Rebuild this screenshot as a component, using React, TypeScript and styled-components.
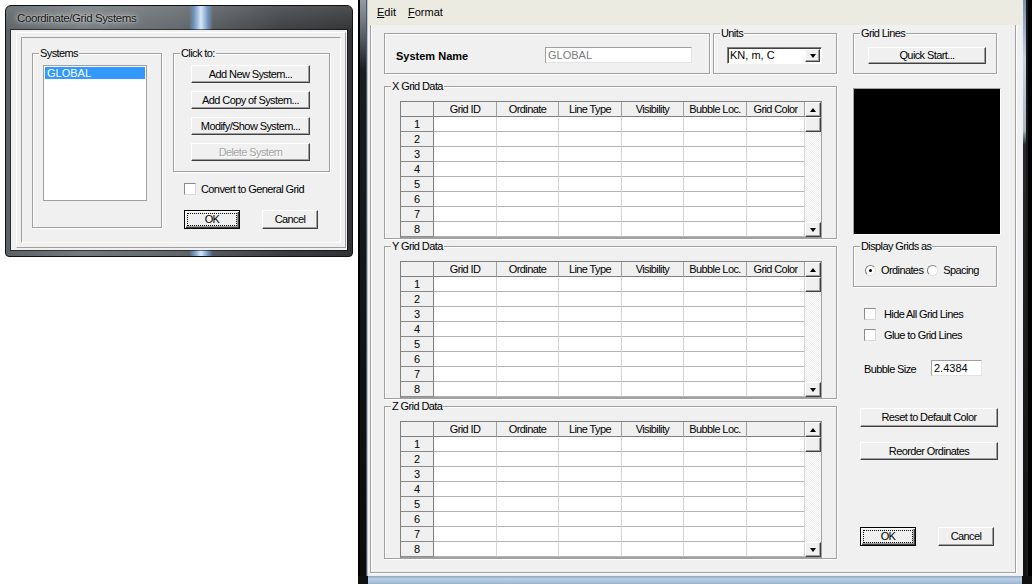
import React from 'react';
import styled, { createGlobalStyle, css } from 'styled-components';

const GlobalStyle = createGlobalStyle`
  html, body { margin: 0; padding: 0; background: #fff; }
  body {
    font-family: "Liberation Sans", Arial, sans-serif;
    font-size: 11px;
    line-height: 13px;
    color: #000;
  }
  * { box-sizing: border-box; }
`;

const raised = css`
  background: #f0f0f0;
  border: 1px solid;
  border-color: #fff #404040 #404040 #fff;
  box-shadow: inset -1px -1px 0 #a0a0a0;
`;

const sunken = css`
  border: 1px solid;
  border-color: #808080 #fff #fff #808080;
  box-shadow: inset 1px 1px 0 #404040;
`;

const Page = styled.div`
  width: 1032px;
  height: 584px;
  display: flex;
  background: #fff;
  overflow: hidden;
`;

/* ---------- left dialog ---------- */

const LeftCol = styled.div`
  width: 358px;
  flex-shrink: 0;
  padding: 5px 0 0 5px;
`;

const AeroDialog = styled.div`
  width: 348px;
  height: 252px;
  display: flex;
  flex-direction: column;
  padding: 0 5px 6px 5px;
  border: 1px solid #101010;
  border-radius: 6px 6px 4px 4px;
  background:
    linear-gradient(90deg, transparent 183px, #6f93bf 188px, #d6e6f6 195px, #6f93bf 202px, transparent 207px),
    linear-gradient(180deg, rgba(255, 255, 255, 0.14), rgba(255, 255, 255, 0) 28px),
    linear-gradient(90deg, #5b6165 0%, #747a7e 22%, #60666a 50%, #3b3e41 80%, #2f3133 100%);
`;

const TitleBar = styled.div`
  height: 24px;
  display: flex;
  align-items: center;
  padding-left: 6px;
  font-size: 11.5px;
  letter-spacing: -0.4px;
  color: #111;
  text-shadow: 0 0 6px rgba(255, 255, 255, 0.9), 0 0 2px rgba(255, 255, 255, 0.7);
`;

const DialogClient = styled.div`
  flex: 1;
  background: #f0f0f0;
  padding: 2px 1px 2px 5px;
  box-shadow: 0 0 0 1px rgba(0, 0, 0, 0.55);
`;

const EtchOuter = styled.div`
  height: 100%;
  padding: 4px;
  border: 1px solid;
  border-color: #fff #a0a0a0 #a0a0a0 #fff;
`;

const EtchInner = styled.div`
  height: 100%;
  display: flex;
  align-items: flex-start;
  gap: 11px;
  padding: 15px 0 0 10px;
  border: 1px solid;
  border-color: #a0a0a0 #fff #fff #a0a0a0;
`;

const GroupBox = styled.div<{ $w: number; $h: number; $pad?: string; $mt?: number }>`
  position: relative;
  flex-shrink: 0;
  width: ${p => p.$w}px;
  height: ${p => p.$h}px;
  margin-top: ${p => p.$mt ?? 0}px;
  padding: ${p => p.$pad ?? '0'};
  border: 1px solid #a0a0a0;
  box-shadow: inset 1px 1px 0 #fff, 1px 1px 0 #fff;
`;

const SystemNameBox = styled(GroupBox)`
  display: flex;
  align-items: center;
`;

const Legend = styled.span`
  position: absolute;
  top: -7px;
  left: 6px;
  padding: 0 1px;
  background: #f0f0f0;
  letter-spacing: -0.6px;
  white-space: nowrap;
`;

const ListBox = styled.div`
  width: 104px;
  height: 136px;
  padding: 1px;
  background: #fff;
  border: 1px solid #a0a0a0;
`;

const ListItem = styled.div`
  height: 12px;
  line-height: 12px;
  padding-left: 2px;
  background: #3399ff;
  color: #fff;
`;

const SideColumn = styled.div`
  display: flex;
  flex-direction: column;
  align-items: flex-start;
`;

const ButtonStack = styled.div`
  display: flex;
  flex-direction: column;
  gap: 8px;
`;

const Btn = styled.div<{ $w: number; $h: number; $disabled?: boolean; $def?: boolean; $mt?: number; $ml?: number }>`
  ${raised};
  flex-shrink: 0;
  width: ${p => p.$w}px;
  height: ${p => p.$h}px;
  margin-top: ${p => p.$mt ?? 0}px;
  margin-left: ${p => p.$ml ?? 0}px;
  display: flex;
  align-items: center;
  justify-content: center;
  letter-spacing: -0.6px;
  white-space: nowrap;
  ${p => p.$disabled && css`
    color: #a3a3a3;
    text-shadow: 1px 1px 0 #fff;
  `}
  ${p => p.$def && css`
    border-color: #000;
    box-shadow: inset 1px 1px 0 #fff, inset -1px -1px 0 #404040, inset -2px -2px 0 #a0a0a0;
    padding: 2px;
  `}
`;

const Focus = styled.span`
  flex: 1;
  align-self: stretch;
  display: flex;
  align-items: center;
  justify-content: center;
  border: 1px dotted #000;
`;

const CheckRow = styled.div<{ $mt: number; $ml: number; $gap: number }>`
  height: 12px;
  display: flex;
  align-items: center;
  gap: ${p => p.$gap}px;
  margin-top: ${p => p.$mt}px;
  margin-left: ${p => p.$ml}px;
  letter-spacing: -0.6px;
  white-space: nowrap;
`;

const CheckBox = styled.span`
  width: 12px;
  height: 12px;
  flex-shrink: 0;
  background: #fff;
  border: 1px solid;
  border-color: #8a8a8a #d8d8d8 #d8d8d8 #8a8a8a;
`;

const ButtonRow = styled.div<{ $mt: number; $ml: number; $gap: number }>`
  display: flex;
  align-items: flex-start;
  gap: ${p => p.$gap}px;
  margin-top: ${p => p.$mt}px;
  margin-left: ${p => p.$ml}px;
`;

/* ---------- right window ---------- */

const RightWin = styled.div`
  width: 674px;
  height: 584px;
  flex-shrink: 0;
  display: grid;
  grid-template-columns: 10px 1fr 10px;
  grid-template-rows: 1fr 8px;
`;

const SideFrame = styled.div<{ $side: 'l' | 'r' }>`
  ${p => p.$side === 'l'
    ? css`
      background:
        linear-gradient(90deg, #000 0 2px, transparent 2px 8px, #4e5864 8px 9px, #b8c2cc 9px 10px),
        linear-gradient(180deg, #939ca6 0, #5a6168 35px, #1b1d1f 70px, #0c0c0c 100%);
    `
    : css`
      background:
        linear-gradient(90deg, #e8eef4 0 1px, transparent 1px 4px, #1a1a1a 4px 6px, #000 6px 10px),
        linear-gradient(180deg, #7d8fa6 0, #c6d4e2 60px, #aab6c2 130px, #25292d 145px, #111 100%);
    `}
`;

const BottomFrame = styled.div`
  grid-column: 1 / -1;
  background:
    linear-gradient(90deg, #101010 0 10px, transparent 10px calc(100% - 10px), #101010 calc(100% - 10px)),
    linear-gradient(180deg, #8fa7c2 0, #bcd0e5 3px, #9bb4cf 8px);
`;

const WinContent = styled.div`
  display: flex;
  flex-direction: column;
  min-height: 0;
`;

const MenuBar = styled.div`
  height: 25px;
  flex-shrink: 0;
  display: flex;
  align-items: center;
  padding-left: 3px;
  background: #ecebe1;
`;

const MenuItem = styled.span`
  padding: 0 6px;
  font-size: 11px;
  u { text-decoration: underline; text-underline-offset: 1px; }
`;

const WinBody = styled.div`
  flex: 1;
  display: flex;
  background: #f0f0f0;
  padding: 0 6px 3px 2px;
`;

const EtchedFrame = styled.div`
  flex: 1;
  display: flex;
  gap: 16px;
  padding: 8px 0 0 13px;
  border: 1px solid #a0a0a0;
  border-top: none;
  box-shadow: inset 1px 0 0 #fff, 1px 1px 0 #fff;
`;

const LeftArea = styled.div`
  width: 453px;
  display: flex;
  flex-direction: column;
`;

const TopRow = styled.div`
  display: flex;
  gap: 3px;
`;

const BoldLabel = styled.span`
  width: 149px;
  flex-shrink: 0;
  font-weight: bold;
  padding-top: 5px;
`;

const EditBox = styled.div<{ $w: number; $muted?: boolean; $mt?: number }>`
  width: ${p => p.$w}px;
  height: 16px;
  flex-shrink: 0;
  display: flex;
  align-items: center;
  padding-left: 2px;
  background: #fff;
  border: 1px solid;
  border-color: #a0a0a0 #e3e3e3 #e3e3e3 #a0a0a0;
  color: ${p => (p.$muted ? '#7a7a7a' : '#000')};
  margin-top: ${p => p.$mt ?? 0}px;
  letter-spacing: 0;
`;

const Combo = styled.div`
  width: 95px;
  height: 17px;
  display: flex;
  align-items: center;
  background: #fff;
  padding: 0 1px 0 2px;
  ${sunken};
`;

const ComboText = styled.span`
  flex: 1;
`;

const ComboBtn = styled.span`
  ${raised};
  width: 15px;
  height: 13px;
  display: flex;
  align-items: center;
  justify-content: center;
`;

const Arrow = styled.span<{ $dir: 'up' | 'down' }>`
  width: 0;
  height: 0;
  border-left: 3.5px solid transparent;
  border-right: 3.5px solid transparent;
  ${p => (p.$dir === 'up' ? css`border-bottom: 4px solid #000;` : css`border-top: 4px solid #000;`)}
`;

/* table */

const TableFrame = styled.div`
  width: 422px;
  height: 137px;
  display: flex;
  background: #fff;
  border: 1px solid;
  border-color: #808080 #a0a0a0 #a0a0a0 #808080;
  overflow: hidden;
`;

const Cells = styled.div`
  display: grid;
  grid-template-columns: 33px 63px 62px 63px 62px 63px 58px;
  grid-auto-rows: 15px;
  align-content: start;
`;

const HeadCell = styled.div<{ $corner?: boolean }>`
  background: #f0f0f0;
  border-right: 1px solid ${p => (p.$corner ? '#808080' : '#a0a0a0')};
  border-bottom: 1px solid #808080;
  display: flex;
  align-items: center;
  justify-content: center;
  letter-spacing: -0.6px;
  white-space: nowrap;
  overflow: hidden;
`;

const RowHead = styled.div`
  background: #f0f0f0;
  border-right: 1px solid #808080;
  border-bottom: 1px solid #8a8a8a;
  display: flex;
  align-items: center;
  justify-content: center;
`;

const DataCell = styled.div`
  background: #fff;
  border-right: 1px solid #d4d4d4;
  border-bottom: 1px solid #b4b4b4;
`;

const ScrollBar = styled.div`
  width: 16px;
  display: flex;
  flex-direction: column;
`;

const ScrollBtn = styled.div`
  ${raised};
  height: 15px;
  flex-shrink: 0;
  display: flex;
  align-items: center;
  justify-content: center;
`;

const ScrollTrack = styled.div`
  flex: 1;
  background: repeating-conic-gradient(#fdfdfd 0 25%, #ededed 0 50%) 0 0 / 2px 2px;
`;

/* right column */

const RightArea = styled.div`
  width: 148px;
  display: flex;
  flex-direction: column;
  align-items: flex-start;
`;

const Preview = styled.div`
  width: 148px;
  height: 147px;
  margin-top: 14px;
  background: #000;
  border: 1px solid;
  border-color: #a0a0a0 #fff #fff #a0a0a0;
`;

const RadioRow = styled.div`
  display: flex;
  align-items: center;
  padding: 17px 0 0 11px;
  letter-spacing: -0.6px;
`;

const Radio = styled.span<{ $on?: boolean; $ml?: number }>`
  width: 11px;
  height: 11px;
  flex-shrink: 0;
  border-radius: 50%;
  background: #fff;
  border: 1px solid;
  border-color: #808080 #e0e0e0 #e0e0e0 #808080;
  margin-left: ${p => p.$ml ?? 0}px;
  margin-right: 5px;
  display: flex;
  align-items: center;
  justify-content: center;
  ${p => p.$on && css`
    &::after {
      content: '';
      width: 3px;
      height: 3px;
      border-radius: 50%;
      background: #000;
    }
  `}
`;

const BubbleRow = styled.div`
  height: 16px;
  display: flex;
  align-items: center;
  margin: 19px 0 0 11px;
  letter-spacing: -0.6px;
`;

const BubbleLabel = styled.span`
  width: 67px;
  padding-top: 3px;
`;

const ROWS = [1, 2, 3, 4, 5, 6, 7, 8];
const COL_COUNT = 6;

const GridTable: React.FC<{ headers: string[] }> = ({ headers }) => (
  <TableFrame>
    <Cells>
      <HeadCell $corner />
      {headers.map((h, i) => (
        <HeadCell key={i}>{h}</HeadCell>
      ))}
      {ROWS.map(r => (
        <React.Fragment key={r}>
          <RowHead>{r}</RowHead>
          {Array.from({ length: COL_COUNT }).map((_, c) => (
            <DataCell key={c} />
          ))}
        </React.Fragment>
      ))}
    </Cells>
    <ScrollBar>
      <ScrollBtn>
        <Arrow $dir="up" />
      </ScrollBtn>
      <ScrollBtn />
      <ScrollTrack />
      <ScrollBtn>
        <Arrow $dir="down" />
      </ScrollBtn>
    </ScrollBar>
  </TableFrame>
);

const HEAD_FULL = ['Grid ID', 'Ordinate', 'Line Type', 'Visibility', 'Bubble Loc.', 'Grid Color'];
const HEAD_Z = ['Grid ID', 'Ordinate', 'Line Type', 'Visibility', 'Bubble Loc.', ''];

const GRIDS = [
  { title: 'X Grid Data', headers: HEAD_FULL, mt: 12 },
  { title: 'Y Grid Data', headers: HEAD_FULL, mt: 7 },
  { title: 'Z Grid Data', headers: HEAD_Z, mt: 7 },
];

export default function App() {
  return (
    <>
      <GlobalStyle />
      <Page>
        <LeftCol>
          <AeroDialog>
            <TitleBar>Coordinate/Grid Systems</TitleBar>
            <DialogClient>
              <EtchOuter>
                <EtchInner>
                  <GroupBox $w={130} $h={175} $pad="11px 0 0 10px">
                    <Legend>Systems</Legend>
                    <ListBox>
                      <ListItem>GLOBAL</ListItem>
                    </ListBox>
                  </GroupBox>
                  <SideColumn>
                    <GroupBox $w={157} $h={119} $pad="11px 0 0 17px">
                      <Legend>Click to:</Legend>
                      <ButtonStack>
                        <Btn $w={119} $h={18}>Add New System...</Btn>
                        <Btn $w={119} $h={18}>Add Copy of System...</Btn>
                        <Btn $w={119} $h={18}>Modify/Show System...</Btn>
                        <Btn $w={119} $h={18} $disabled>Delete System</Btn>
                      </ButtonStack>
                    </GroupBox>
                    <CheckRow $mt={11} $ml={11} $gap={5}>
                      <CheckBox />
                      <span>Convert to General Grid</span>
                    </CheckRow>
                    <ButtonRow $mt={15} $ml={11} $gap={22}>
                      <Btn $w={56} $h={19} $def>
                        <Focus>OK</Focus>
                      </Btn>
                      <Btn $w={56} $h={19}>Cancel</Btn>
                    </ButtonRow>
                  </SideColumn>
                </EtchInner>
              </EtchOuter>
            </DialogClient>
          </AeroDialog>
        </LeftCol>

        <RightWin>
          <SideFrame $side="l" />
          <WinContent>
            <MenuBar>
              <MenuItem>
                <u>E</u>dit
              </MenuItem>
              <MenuItem>
                <u>F</u>ormat
              </MenuItem>
            </MenuBar>
            <WinBody>
              <EtchedFrame>
                <LeftArea>
                  <TopRow>
                    <SystemNameBox $w={326} $h={41} $pad="0 0 0 11px">
                      <BoldLabel>System Name</BoldLabel>
                      <EditBox $w={147} $mt={3} $muted>GLOBAL</EditBox>
                    </SystemNameBox>
                    <GroupBox $w={124} $h={41} $pad="13px 0 0 13px">
                      <Legend>Units</Legend>
                      <Combo>
                        <ComboText>KN, m, C</ComboText>
                        <ComboBtn>
                          <Arrow $dir="down" />
                        </ComboBtn>
                      </Combo>
                    </GroupBox>
                  </TopRow>
                  {GRIDS.map(g => (
                    <GroupBox key={g.title} $w={453} $h={153} $mt={g.mt} $pad="14px 0 0 15px">
                      <Legend>{g.title}</Legend>
                      <GridTable headers={g.headers} />
                    </GroupBox>
                  ))}
                </LeftArea>

                <RightArea>
                  <GroupBox $w={144} $h={41} $pad="13px 0 0 14px">
                    <Legend>Grid Lines</Legend>
                    <Btn $w={118} $h={17}>Quick Start...</Btn>
                  </GroupBox>
                  <Preview />
                  <GroupBox $w={144} $h={41} $mt={11}>
                    <Legend>Display Grids as</Legend>
                    <RadioRow>
                      <Radio $on />
                      <span>Ordinates</span>
                      <Radio $ml={4} />
                      <span>Spacing</span>
                    </RadioRow>
                  </GroupBox>
                  <CheckRow $mt={21} $ml={11} $gap={8}>
                    <CheckBox />
                    <span>Hide All Grid Lines</span>
                  </CheckRow>
                  <CheckRow $mt={9} $ml={11} $gap={8}>
                    <CheckBox />
                    <span>Glue to Grid Lines</span>
                  </CheckRow>
                  <BubbleRow>
                    <BubbleLabel>Bubble Size</BubbleLabel>
                    <EditBox $w={51}>2.4384</EditBox>
                  </BubbleRow>
                  <Btn $w={138} $h={19} $mt={32} $ml={7}>Reset to Default Color</Btn>
                  <Btn $w={138} $h={18} $mt={15} $ml={7}>Reorder Ordinates</Btn>
                  <ButtonRow $mt={67} $ml={7} $gap={22}>
                    <Btn $w={56} $h={19} $def>
                      <Focus>OK</Focus>
                    </Btn>
                    <Btn $w={56} $h={19}>Cancel</Btn>
                  </ButtonRow>
                </RightArea>
              </EtchedFrame>
            </WinBody>
          </WinContent>
          <SideFrame $side="r" />
          <BottomFrame />
        </RightWin>
      </Page>
    </>
  );
}
